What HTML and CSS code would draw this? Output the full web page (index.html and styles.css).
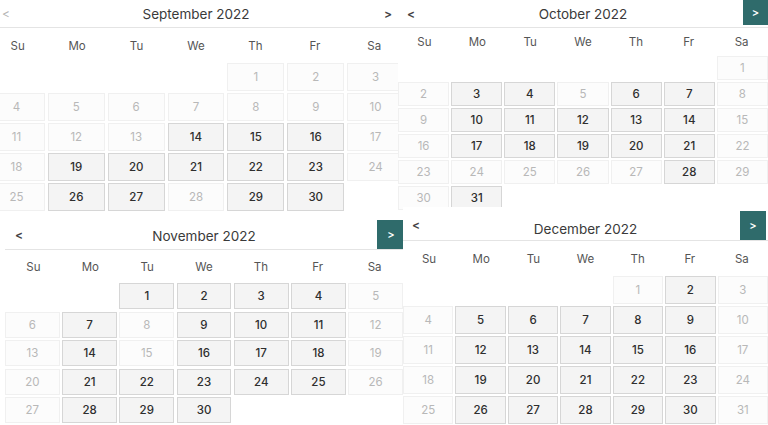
FILE: index.html
```html
<!DOCTYPE html>
<html>
<head>
<meta charset="utf-8">
<link rel="stylesheet" href="styles.css">
</head>
<body>
<div class="canvas">

  <section class="cal cal-sep">
    <div class="head">
      <span class="nav nav-off">&lt;</span>
      <span class="title">September 2022</span>
      <span class="nav">&gt;</span>
    </div>
    <div class="dow"><span>Su</span><span>Mo</span><span>Tu</span><span>We</span><span>Th</span><span>Fr</span><span>Sa</span></div>
    <div class="days">
      <span class="e"></span><span class="e"></span><span class="e"></span><span class="e"></span><span class="d">1</span><span class="d">2</span><span class="d">3</span>
      <span class="d">4</span><span class="d">5</span><span class="d">6</span><span class="d">7</span><span class="d">8</span><span class="d">9</span><span class="d">10</span>
      <span class="d">11</span><span class="d">12</span><span class="d">13</span><span class="a">14</span><span class="a">15</span><span class="a">16</span><span class="d">17</span>
      <span class="d">18</span><span class="a">19</span><span class="a">20</span><span class="a">21</span><span class="a">22</span><span class="a">23</span><span class="d">24</span>
      <span class="d">25</span><span class="a">26</span><span class="a">27</span><span class="d">28</span><span class="a">29</span><span class="a">30</span><span class="e"></span>
    </div>
  </section>

  <section class="cal cal-oct">
    <div class="head">
      <span class="nav">&lt;</span>
      <span class="title">October 2022</span>
      <span class="nav nav-btn">&gt;</span>
    </div>
    <div class="dow"><span>Su</span><span>Mo</span><span>Tu</span><span>We</span><span>Th</span><span>Fr</span><span>Sa</span></div>
    <div class="days">
      <span class="e"></span><span class="e"></span><span class="e"></span><span class="e"></span><span class="e"></span><span class="e"></span><span class="d">1</span>
      <span class="d">2</span><span class="a">3</span><span class="a">4</span><span class="d">5</span><span class="a">6</span><span class="a">7</span><span class="d">8</span>
      <span class="d">9</span><span class="a">10</span><span class="a">11</span><span class="a">12</span><span class="a">13</span><span class="a">14</span><span class="d">15</span>
      <span class="d">16</span><span class="a">17</span><span class="a">18</span><span class="a">19</span><span class="a">20</span><span class="a">21</span><span class="d">22</span>
      <span class="d">23</span><span class="d">24</span><span class="d">25</span><span class="d">26</span><span class="d">27</span><span class="a">28</span><span class="d">29</span>
      <span class="d">30</span><span class="a">31</span>
    </div>
  </section>

  <section class="cal cal-nov">
    <div class="head">
      <span class="nav">&lt;</span>
      <span class="title">November 2022</span>
      <span class="nav nav-btn">&gt;</span>
    </div>
    <div class="dow"><span>Su</span><span>Mo</span><span>Tu</span><span>We</span><span>Th</span><span>Fr</span><span>Sa</span></div>
    <div class="days">
      <span class="e"></span><span class="e"></span><span class="a">1</span><span class="a">2</span><span class="a">3</span><span class="a">4</span><span class="d">5</span>
      <span class="d">6</span><span class="a">7</span><span class="d">8</span><span class="a">9</span><span class="a">10</span><span class="a">11</span><span class="d">12</span>
      <span class="d">13</span><span class="a">14</span><span class="d">15</span><span class="a">16</span><span class="a">17</span><span class="a">18</span><span class="d">19</span>
      <span class="d">20</span><span class="a">21</span><span class="a">22</span><span class="a">23</span><span class="a">24</span><span class="a">25</span><span class="d">26</span>
      <span class="d">27</span><span class="a">28</span><span class="a">29</span><span class="a">30</span>
    </div>
  </section>

  <section class="cal cal-dec">
    <div class="head">
      <span class="nav">&lt;</span>
      <span class="title">December 2022</span>
      <span class="nav nav-btn">&gt;</span>
    </div>
    <div class="dow"><span>Su</span><span>Mo</span><span>Tu</span><span>We</span><span>Th</span><span>Fr</span><span>Sa</span></div>
    <div class="days">
      <span class="e"></span><span class="e"></span><span class="e"></span><span class="e"></span><span class="d">1</span><span class="a">2</span><span class="d">3</span>
      <span class="d">4</span><span class="a">5</span><span class="a">6</span><span class="a">7</span><span class="a">8</span><span class="a">9</span><span class="d">10</span>
      <span class="d">11</span><span class="a">12</span><span class="a">13</span><span class="a">14</span><span class="a">15</span><span class="a">16</span><span class="d">17</span>
      <span class="d">18</span><span class="a">19</span><span class="a">20</span><span class="a">21</span><span class="a">22</span><span class="a">23</span><span class="d">24</span>
      <span class="d">25</span><span class="a">26</span><span class="a">27</span><span class="a">28</span><span class="a">29</span><span class="a">30</span><span class="d">31</span>
    </div>
  </section>

</div>
</body>
</html>
```

FILE: styles.css
```css
* { box-sizing: border-box; }
html, body { margin: 0; padding: 0; background: #fff; }
body {
  font-family: "Inter", "Lato", "Liberation Sans", sans-serif;
  color: #333;
  overflow: hidden;
}
.canvas {
  position: relative;
  width: 768px;
  height: 425px;
  overflow: hidden;
  background: #fff;
}

/* each calendar is a clipped screenshot placed on the collage */
.cal {
  position: absolute;
  background: #fff;
  overflow: hidden;
}
.head {
  position: relative;
  display: flex;
  align-items: center;
  justify-content: space-between;
  border-bottom: 1px solid #e4e4e4;
}
.title {
  position: absolute;
  left: 0;
  right: 0;
  text-align: center;
  font-size: 13.5px;
  color: #3a3a3a;
  pointer-events: none;
}
.nav {
  font-size: 12px;
  font-weight: 600;
  color: #444;
  line-height: 1;
}
.nav-off { color: #b5b5b5; font-weight: 400; }
.nav-btn {
  display: flex;
  align-items: center;
  justify-content: center;
  background: #2f6b6b;
  color: #fff;
  font-size: 11px;
}
.dow {
  display: grid;
  grid-template-columns: repeat(7, 1fr);
  align-items: center;
  font-size: 11.5px;
  color: #555;
  text-align: center;
}
.days {
  display: grid;
  grid-template-columns: repeat(7, 1fr);
  font-size: 11.5px;
  text-align: center;
}
.days span {
  display: flex;
  align-items: center;
  justify-content: center;
}
.days .a {
  background: #f4f4f4;
  border: 1px solid #d6d6d6;
  color: #2e2e2e;
  font-weight: 500;
}
.days .d {
  background: #fcfcfc;
  border: 1px solid #f0f0f0;
  color: #b8b8b8;
}

/* September */
.cal-sep { left: -12px; top: 0; width: 416px; height: 211px; z-index: 1; }
.cal-sep .head { height: 28px; padding: 0 12px 0 14px; }
.cal-sep .dow { height: 35px; }
.cal-sep .days { column-gap: 3px; row-gap: 2px; grid-auto-rows: 28px; }

/* October */
.cal-oct { left: 398px; top: 0; width: 370px; height: 210px; z-index: 2; }
.cal-oct .head { height: 28px; padding-left: 9px; }
.cal-oct .nav-btn { width: 25px; height: 25px; margin-top: -3px; }
.cal-oct .dow { height: 28px; }
.cal-oct .days { column-gap: 2px; row-gap: 2px; grid-auto-rows: 24px; }

/* November */
.cal-nov { left: 5px; top: 212px; width: 398px; height: 213px; z-index: 3; }
.cal-nov .head { height: 38px; padding: 8px 0 0 10px; }
.cal-nov .title { top: 16px; }
.cal-nov .nav-btn { width: 28px; height: 29px; margin-right: -2px; }
.cal-nov .dow { height: 33px; }
.cal-nov .days { column-gap: 2.5px; row-gap: 2.5px; grid-auto-rows: 26px; }

/* December */
.cal-dec { left: 403px; top: 207px; width: 365px; height: 218px; z-index: 4; }
.cal-dec .head { height: 34px; padding: 3px 2px 0 9px; }
.cal-dec .title { top: 14px; }
.cal-dec .nav-btn { width: 26px; height: 29px; }
.cal-dec .dow { height: 35px; }
.cal-dec .days { column-gap: 2px; row-gap: 2px; grid-auto-rows: 28px; }
```
